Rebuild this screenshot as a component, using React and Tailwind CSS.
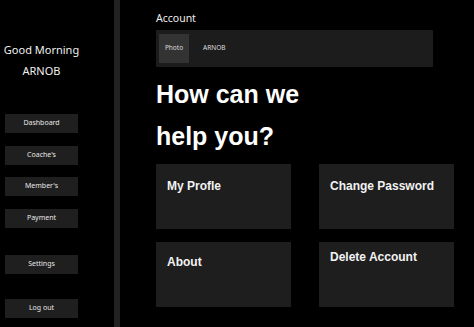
import React from 'react';

const navItems = [
  { label: 'Dashboard', mt: 'mt-0' },
  { label: "Coache's", mt: 'mt-[13px]' },
  { label: "Member's", mt: 'mt-[12px]' },
  { label: 'Payment', mt: 'mt-[13px]' },
  { label: 'Settings', mt: 'mt-[27px]' },
  { label: 'Log out', mt: 'mt-[25px]' },
];

const ui = { fontFamily: '"Noto Sans", "Open Sans", sans-serif' };
const arial = { fontFamily: '"Liberation Sans", Arial, sans-serif' };

function Card({ title, offset }) {
  return (
    <div className="bg-[#1e1e1e] h-[65px] px-[11px]">
      <p className={`${offset} text-[12px] font-bold text-[#f2f2f2]`}>{title}</p>
    </div>
  );
}

function App() {
  return (
    <div className="w-[474px] h-[327px] bg-black flex overflow-hidden text-white">
      {/* sidebar */}
      <aside className="w-[114px] shrink-0 flex flex-col items-start" style={ui}>
        <div className="w-[83px] text-center mt-[40px] whitespace-nowrap">
          <p className="text-[11px] leading-[20px] text-[#f0f0f0]">Good Morning</p>
          <p className="text-[11px] leading-[20px] mt-[1px] text-[#f0f0f0]">ARNOB</p>
        </div>
        <nav className="mt-[33px] ml-[5px] flex flex-col">
          {navItems.map((item) => (
            <button
              key={item.label}
              className={`${item.mt} w-[73px] h-[19px] bg-[#1f1f1f] text-[7px] text-[#e8e8e8] flex items-center justify-center whitespace-nowrap`}
            >
              {item.label}
            </button>
          ))}
        </nav>
      </aside>
      <div className="w-[6px] shrink-0 bg-[#222222]" />

      {/* main */}
      <main className="flex-1 pl-[36px] pt-[11px]">
        <p className="text-[10.5px] text-[#eeeeee]" style={ui}>
          Account
        </p>
        <div className="mt-[3px] w-[277px] h-[37px] bg-[#1c1c1c] flex items-center pl-[3px]" style={ui}>
          <div className="w-[30px] h-[29px] bg-[#333333] flex items-center justify-center text-[6.5px] text-[#dddddd]">
            Photo
          </div>
          <span className="ml-[14px] text-[6.5px] text-[#dddddd]">ARNOB</span>
        </div>

        <h1 className="mt-[6px] text-[25px] font-bold leading-[42px] text-white" style={arial}>
          How can we
          <br />
          help you?
        </h1>

        <div className="mt-[7px] grid grid-cols-[135px_135px] gap-x-[28px] gap-y-[13px]" style={arial}>
          <Card title="My Profle" offset="mt-[13px]" />
          <Card title="Change Password" offset="mt-[13px]" />
          <Card title="About" offset="mt-[11px]" />
          <Card title="Delete Account" offset="mt-[6px]" />
        </div>
      </main>
    </div>
  );
}

export default App;
